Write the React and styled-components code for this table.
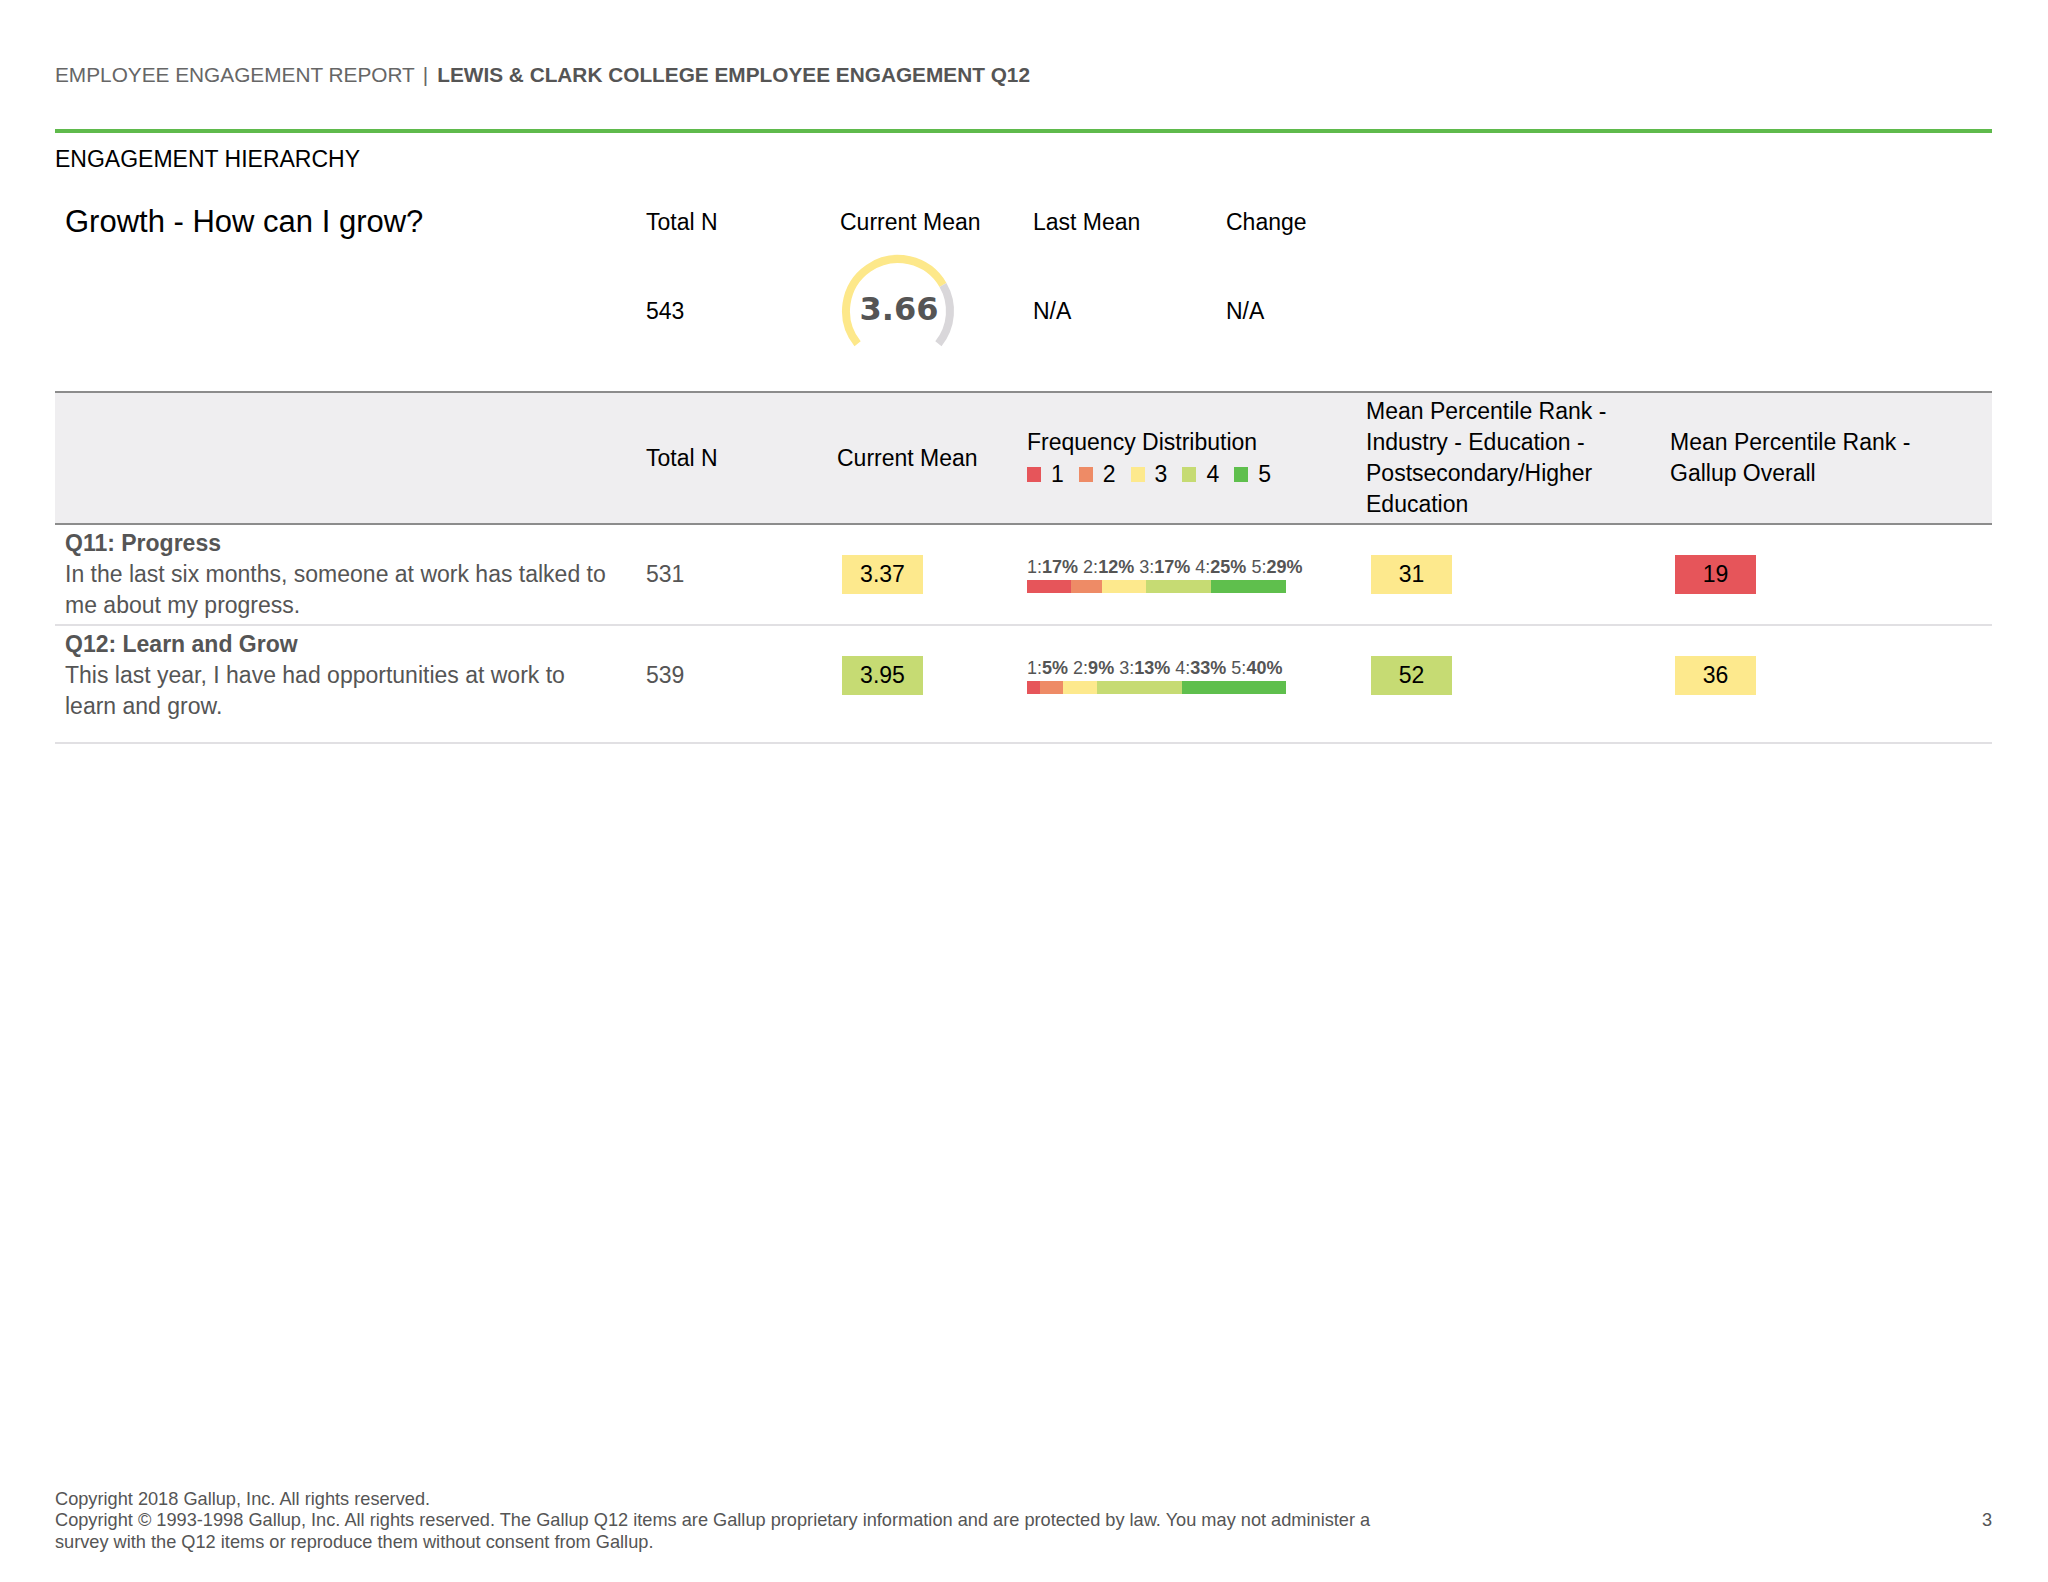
import React from 'react';
import styled, { createGlobalStyle } from 'styled-components';

const COLORS = {
  1: '#e6555a',
  2: '#ee8b66',
  3: '#fde98d',
  4: '#c6db73',
  5: '#5fbf4d',
};

const GlobalStyle = createGlobalStyle`
  html, body {
    margin: 0;
    padding: 0;
    background: #fff;
  }
  body {
    font-family: "Liberation Sans", Arial, sans-serif;
  }
`;

const Page = styled.div`
  box-sizing: border-box;
  width: 2048px;
  min-height: 1582px;
  padding: 63px 56px 29px 55px;
  display: flex;
  flex-direction: column;
`;

const ReportHeader = styled.div`
  font-size: 20.8px;
  line-height: 24px;
  color: #666;
  white-space: nowrap;
`;

const Divider = styled.span`
  margin: 0 9px 0 8px;
`;

const ReportName = styled.b`
  color: #555;
  font-weight: 700;
`;

const Rule = styled.hr`
  margin: 42px 0 0;
  border: 0;
  height: 4px;
  background: #5fba4c;
`;

const SectionTitle = styled.div`
  margin-top: 12px;
  font-size: 23px;
  line-height: 28px;
  color: #000;
`;

const Summary = styled.div`
  margin-top: 31px;
  display: grid;
  grid-template-columns: 591px 194px 193px 193px 1fr;
  grid-template-rows: 36px 116px;
  row-gap: 13px;
  align-items: center;
  font-size: 23px;
  color: #000;
`;

const GroupTitle = styled.h1`
  margin: 0;
  padding-left: 10px;
  font-size: 31px;
  font-weight: 400;
  line-height: 36px;
`;

const StatLabel = styled.div`
  line-height: 28px;
`;

const StatValue = styled.div`
  line-height: 28px;
`;

const GaugeSvg = styled.svg`
  display: block;
  width: 116px;
  height: 116px;
`;

const GaugeText = styled.text`
  font-family: "DejaVu Sans", Verdana, sans-serif;
  font-weight: 700;
  font-size: 32px;
  fill: #555;
`;

const Table = styled.div`
  margin-top: 22px;
`;

const COLS = '591px 191px 190px 339px 304px 1fr';

const HeadRow = styled.div`
  display: grid;
  grid-template-columns: ${COLS};
  align-items: center;
  height: 130px;
  background: #efeef0;
  border-top: 2px solid #8c8c8c;
  border-bottom: 2px solid #8c8c8c;
  font-size: 23px;
  line-height: 31px;
  color: #000;
`;

const HeadCell = styled.div`
  max-width: ${p => p.$max || 'none'};
`;

const Legend = styled.div`
  display: flex;
  align-items: center;
  gap: 15px;
  margin-top: 1px;
`;

const LegendItem = styled.span`
  display: inline-flex;
  align-items: center;
  gap: 10px;
`;

const Swatch = styled.i`
  display: inline-block;
  width: 14px;
  height: 15px;
  background: ${p => p.$color};
`;

const BodyRow = styled.div`
  display: grid;
  grid-template-columns: ${COLS};
  align-items: center;
  padding: 3px 0 ${p => p.$padBottom}px;
  border-bottom: 2px solid #e1e0e3;
  font-size: 23px;
  line-height: 31px;
  color: #555;
`;

const Question = styled.div`
  align-self: start;
  padding-left: 10px;
  max-width: 556px;
`;

const QuestionTitle = styled.div`
  font-weight: 700;
`;

const ValueBox = styled.div`
  width: 81px;
  height: 39px;
  margin-left: 5px;
  display: flex;
  align-items: center;
  justify-content: center;
  background: ${p => p.$color};
  color: #000;
`;

const Freq = styled.div`
  display: flex;
  flex-direction: column;
  gap: 3px;
`;

const FreqText = styled.div`
  font-size: 18px;
  line-height: 20px;
  color: #555;
  white-space: nowrap;

  b {
    font-weight: 700;
  }
`;

const Bar = styled.div`
  display: flex;
  width: 259px;
  height: 13px;
`;

const Segment = styled.span`
  width: ${p => p.$pct}%;
  background: ${p => p.$color};
`;

const Footer = styled.footer`
  margin-top: auto;
  display: flex;
  justify-content: space-between;
  align-items: center;
  font-size: 18.2px;
  line-height: 21.5px;
  color: #555;
`;

const Notice = styled.div`
  max-width: 1355px;
`;

function arcPoint(cx, cy, r, deg) {
  const a = (deg * Math.PI) / 180;
  return [cx + r * Math.sin(a), cy - r * Math.cos(a)];
}

function arcPath(cx, cy, r, from, to) {
  const [x1, y1] = arcPoint(cx, cy, r, from);
  const [x2, y2] = arcPoint(cx, cy, r, to);
  const large = to - from > 180 ? 1 : 0;
  return `M ${x1} ${y1} A ${r} ${r} 0 ${large} 1 ${x2} ${y2}`;
}

function Gauge({ value }) {
  const start = -129;
  const end = 129;
  const split = start + (value / 5) * (end - start);

  return (
    <GaugeSvg viewBox="0 0 116 116">
      <path d={arcPath(58, 58, 52, start, split)} fill="none" stroke="#fde88a" strokeWidth="8" />
      <path d={arcPath(58, 58, 52, split, end)} fill="none" stroke="#d9d7da" strokeWidth="8" />
      <GaugeText x="59" y="67" textAnchor="middle">{value.toFixed(2)}</GaugeText>
    </GaugeSvg>
  );
}

const questions = [
  {
    id: 'q11',
    title: 'Q11: Progress',
    text: 'In the last six months, someone at work has talked to me about my progress.',
    n: 531,
    mean: { value: '3.37', color: COLORS[3] },
    dist: [17, 12, 17, 25, 29],
    industry: { value: '31', color: COLORS[3] },
    gallup: { value: '19', color: COLORS[1] },
    padBottom: 3,
  },
  {
    id: 'q12',
    title: 'Q12: Learn and Grow',
    text: 'This last year, I have had opportunities at work to learn and grow.',
    n: 539,
    mean: { value: '3.95', color: COLORS[4] },
    dist: [5, 9, 13, 33, 40],
    industry: { value: '52', color: COLORS[4] },
    gallup: { value: '36', color: COLORS[3] },
    padBottom: 20,
  },
];

export default function App() {
  return (
    <Page>
      <GlobalStyle />
      <ReportHeader>
        EMPLOYEE ENGAGEMENT REPORT<Divider>|</Divider>
        <ReportName>LEWIS &amp; CLARK COLLEGE EMPLOYEE ENGAGEMENT Q12</ReportName>
      </ReportHeader>
      <Rule />
      <SectionTitle>ENGAGEMENT HIERARCHY</SectionTitle>

      <Summary>
        <GroupTitle>Growth - How can I grow?</GroupTitle>
        <StatLabel>Total N</StatLabel>
        <StatLabel>Current Mean</StatLabel>
        <StatLabel>Last Mean</StatLabel>
        <StatLabel>Change</StatLabel>

        <div />
        <StatValue>543</StatValue>
        <Gauge value={3.66} />
        <StatValue>N/A</StatValue>
        <StatValue>N/A</StatValue>
      </Summary>

      <Table>
        <HeadRow>
          <div />
          <HeadCell>Total N</HeadCell>
          <HeadCell>Current Mean</HeadCell>
          <HeadCell>
            Frequency Distribution
            <Legend>
              {[1, 2, 3, 4, 5].map(k => (
                <LegendItem key={k}>
                  <Swatch $color={COLORS[k]} />
                  {k}
                </LegendItem>
              ))}
            </Legend>
          </HeadCell>
          <HeadCell $max="280px">Mean Percentile Rank - Industry - Education - Postsecondary/Higher Education</HeadCell>
          <HeadCell $max="270px">Mean Percentile Rank - Gallup Overall</HeadCell>
        </HeadRow>

        {questions.map(q => (
          <BodyRow key={q.id} $padBottom={q.padBottom}>
            <Question>
              <QuestionTitle>{q.title}</QuestionTitle>
              {q.text}
            </Question>
            <div>{q.n}</div>
            <div>
              <ValueBox $color={q.mean.color}>{q.mean.value}</ValueBox>
            </div>
            <Freq>
              <FreqText>
                {q.dist.map((p, i) => (
                  <React.Fragment key={i}>
                    {i > 0 ? ' ' : ''}
                    {i + 1}:<b>{p}%</b>
                  </React.Fragment>
                ))}
              </FreqText>
              <Bar>
                {q.dist.map((p, i) => (
                  <Segment key={i} $pct={p} $color={COLORS[i + 1]} />
                ))}
              </Bar>
            </Freq>
            <div>
              <ValueBox $color={q.industry.color}>{q.industry.value}</ValueBox>
            </div>
            <div>
              <ValueBox $color={q.gallup.color}>{q.gallup.value}</ValueBox>
            </div>
          </BodyRow>
        ))}
      </Table>

      <Footer>
        <Notice>
          Copyright 2018 Gallup, Inc. All rights reserved.
          <br />
          Copyright © 1993-1998 Gallup, Inc. All rights reserved. The Gallup Q12 items are Gallup proprietary information and are protected by law. You may not administer a survey with the Q12 items or reproduce them without consent from Gallup.
        </Notice>
        <span>3</span>
      </Footer>
    </Page>
  );
}
